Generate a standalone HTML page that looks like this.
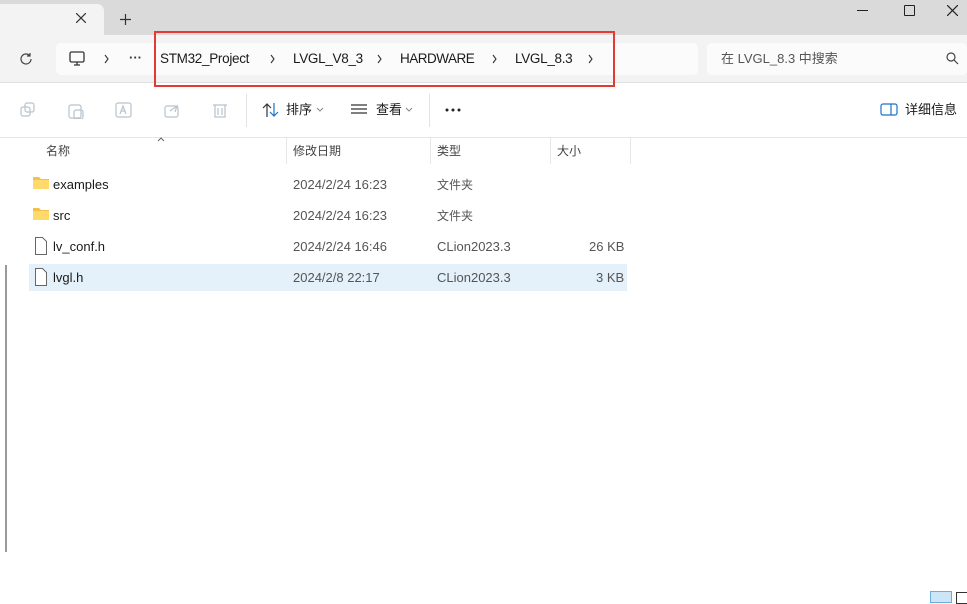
<!DOCTYPE html><html><head><meta charset="utf-8"><style>
body{margin:0;width:967px;height:600px;position:relative;overflow:hidden;background:#fff;font-family:"Liberation Sans","Noto Sans CJK SC",sans-serif;font-size:13px;line-height:16px;color:#1a1a1a}
.a{position:absolute}
.t{position:absolute;white-space:nowrap}
.c{font-size:12px;color:#333}
</style></head><body>
<div class="a" style="left:0;top:0;width:967px;height:35px;background:#dadada"></div>
<div class="a" style="left:0;top:4px;width:104px;height:31px;background:#f3f3f3;border-radius:0 7px 0 0"></div>
<svg class="a" style="left:76px;top:13px" width="10" height="10" stroke="#333" stroke-width="1.2"><path d="M0 0l10 10M10 0L0 10"/></svg>
<svg class="a" style="left:120px;top:14px" width="11" height="11" stroke="#333" stroke-width="1.2"><path d="M5.5 0v11M0 5.5h11"/></svg>
<div class="a" style="left:857px;top:10px;width:11px;height:1px;background:#222"></div>
<div class="a" style="left:904px;top:5px;width:9px;height:9px;border:1.3px solid #222;border-radius:1px"></div>
<svg class="a" style="left:947px;top:5px" width="11" height="11" stroke="#222" stroke-width="1.2"><path d="M0 0l11 11M11 0L0 11"/></svg>
<div class="a" style="left:0;top:35px;width:967px;height:47px;background:#f3f3f3;border-bottom:1px solid #e0e0e0"></div>
<div class="a" style="left:56px;top:43px;width:642px;height:32px;background:#fbfbfb;border-radius:5px"></div>
<div class="a" style="left:707px;top:43px;width:260px;height:32px;background:#fbfbfb;border-radius:5px"></div>
<svg class="a" style="left:18px;top:51px" width="16" height="16" viewBox="0 0 16 16"><path d="M13 8a5 5 0 1 1-1.5-3.6M12 2v3h-3" fill="none" stroke="#444" stroke-width="1.2"/></svg>
<svg class="a" style="left:68px;top:50px" width="18" height="18" viewBox="0 0 18 18"><rect x="2" y="2" width="14" height="10" rx="1.5" fill="none" stroke="#333" stroke-width="1.3"/><path d="M6 15h6M9 12v3" stroke="#333" stroke-width="1.3"/></svg>
<svg class="a" style="left:0;top:0" width="620" height="80" fill="none" stroke="#333" stroke-width="1.1"><path d="M105 55l3 4-3 4M271 55l3 4-3 4M378 55l3 4-3 4M493 55l3 4-3 4M589 55l3 4-3 4"/></svg>
<div class="t" style="left:129px;top:50px;color:#333;font-weight:bold">···</div>
<div class="t" style="left:160px;top:51px;font-size:13.5px;letter-spacing:-0.3px">STM32_Project</div>
<div class="t" style="left:293px;top:51px;font-size:13.5px;letter-spacing:-0.3px">LVGL_V8_3</div>
<div class="t" style="left:400px;top:51px;font-size:13.5px;letter-spacing:-0.5px">HARDWARE</div>
<div class="t" style="left:515px;top:51px;font-size:13.5px;letter-spacing:-0.3px">LVGL_8.3</div>
<div class="a" style="left:154px;top:31px;width:461px;height:56px;border:2px solid #e53935;box-sizing:border-box"></div>
<div class="t" style="left:721px;top:51px;color:#555">在 LVGL_8.3 中搜索</div>
<svg class="a" style="left:946px;top:52px" width="13" height="13"><circle cx="5" cy="5" r="4" fill="none" stroke="#444" stroke-width="1.2"/><path d="M8 8l4 4" stroke="#444" stroke-width="1.2"/></svg>
<svg class="a" style="left:20px;top:101px" width="220" height="18" fill="none" stroke="#b8c3cc" stroke-width="1.2"><rect x="1" y="6" width="9" height="9" rx="2"/><rect x="5" y="2" width="9" height="9" rx="2"/><rect x="49" y="4" width="12" height="13" rx="2"/><rect x="54" y="9" width="9" height="9" rx="2"/><rect x="96" y="2" width="15" height="14" rx="2"/><path d="M100 13l3-8 3 8M101 10h4"/><rect x="145" y="5" width="13" height="11" rx="2"/><path d="M150 10l7-5-2 6"/><path d="M193 4h14M195 4v12h10V4M198 7v7M202 7v7"/></svg>
<div class="a" style="left:246px;top:94px;width:1px;height:33px;background:#e3e3e3"></div>
<div class="a" style="left:429px;top:94px;width:1px;height:33px;background:#e3e3e3"></div>
<svg class="a" style="left:262px;top:102px" width="18" height="16" fill="none" stroke-width="1.2"><path d="M5 15V2M1 6l4-4 4 4" stroke="#333"/><path d="M12 1v13M8 10l4 4 4-4" stroke="#1a73c8"/></svg>
<div class="t" style="left:286px;top:102px">排序</div>
<svg class="a" style="left:316px;top:107px" width="8" height="5" fill="none" stroke="#888"><path d="M1 1l3 3 3-3"/></svg>
<svg class="a" style="left:351px;top:103px" width="16" height="12" stroke="#333" stroke-width="1.2"><path d="M0 2h16M0 6h16M0 10h16"/></svg>
<div class="t" style="left:376px;top:102px">查看</div>
<svg class="a" style="left:405px;top:107px" width="8" height="5" fill="none" stroke="#888"><path d="M1 1l3 3 3-3"/></svg>
<svg class="a" style="left:445px;top:108px" width="18" height="4" fill="#222"><circle cx="2" cy="2" r="1.5"/><circle cx="8" cy="2" r="1.5"/><circle cx="14" cy="2" r="1.5"/></svg>
<svg class="a" style="left:880px;top:103px" width="18" height="13" fill="none" stroke="#1a73c8" stroke-width="1.2"><rect x="1" y="1" width="16" height="11" rx="2"/><path d="M11 1v11"/></svg>
<div class="t" style="left:905px;top:102px">详细信息</div>
<div class="a" style="left:0;top:137px;width:967px;height:1px;background:#e6e6e6"></div>
<svg class="a" style="left:157px;top:137px" width="8" height="5" fill="none" stroke="#666"><path d="M1 4l3-3 3 3"/></svg>
<div class="t c" style="left:46px;top:143px;color:#444">名称</div>
<div class="t c" style="left:293px;top:143px;color:#444">修改日期</div>
<div class="t c" style="left:437px;top:143px;color:#444">类型</div>
<div class="t c" style="left:557px;top:143px;color:#444">大小</div>
<div class="a" style="left:286px;top:138px;width:1px;height:26px;background:#e6e6e6"></div>
<div class="a" style="left:430px;top:138px;width:1px;height:26px;background:#e6e6e6"></div>
<div class="a" style="left:550px;top:138px;width:1px;height:26px;background:#e6e6e6"></div>
<div class="a" style="left:630px;top:138px;width:1px;height:26px;background:#e6e6e6"></div>
<div class="a" style="left:29px;top:264px;width:598px;height:27px;background:#e4f0fa"></div>
<div class="a" style="left:5px;top:265px;width:2px;height:287px;background:#9a9a9a"></div>
<svg class="a" style="left:32px;top:174px" width="18" height="120"><path d="M1 3h6l2 2h8v10H1z" fill="#f2c04c"/><path d="M1 6h16v9H1z" fill="#ffd96a"/><path d="M1 34h6l2 2h8v10H1z" fill="#f2c04c"/><path d="M1 37h16v9H1z" fill="#ffd96a"/><path d="M3.5 63.5h7l4 4v13h-11z" fill="#fff" stroke="#666"/><path d="M3.5 94.5h7l4 4v13h-11z" fill="#fff" stroke="#666"/></svg>
<div class="t" style="left:53px;top:177px">examples</div>
<div class="t" style="left:53px;top:208px">src</div>
<div class="t" style="left:53px;top:239px">lv_conf.h</div>
<div class="t" style="left:53px;top:270px">lvgl.h</div>
<div class="t" style="left:293px;top:177px;color:#555">2024/2/24 16:23</div>
<div class="t" style="left:293px;top:208px;color:#555">2024/2/24 16:23</div>
<div class="t" style="left:293px;top:239px;color:#555">2024/2/24 16:46</div>
<div class="t" style="left:293px;top:270px;color:#555">2024/2/8 22:17</div>
<div class="t c" style="left:437px;top:177px;color:#555">文件夹</div>
<div class="t c" style="left:437px;top:208px;color:#555">文件夹</div>
<div class="t" style="left:437px;top:239px;color:#555">CLion2023.3</div>
<div class="t" style="left:437px;top:270px;color:#555">CLion2023.3</div>
<div class="t" style="left:589px;top:239px;color:#555">26 KB</div>
<div class="t" style="left:596px;top:270px;color:#555">3 KB</div>
<div class="a" style="left:930px;top:591px;width:20px;height:10px;background:#cde6f7;border:1px solid #6ab0de"></div>
<div class="a" style="left:956px;top:592px;width:12px;height:10px;border:1px solid #333"></div>
</body></html>
